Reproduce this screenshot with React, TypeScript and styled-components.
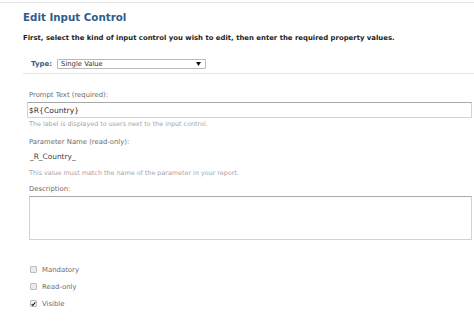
import React from "react";
import styled, { createGlobalStyle } from "styled-components";

const GlobalStyle = createGlobalStyle`
  html, body {
    margin: 0;
    padding: 0;
    background: #ffffff;
  }
  body {
    font-family: "DejaVu Sans", Verdana, sans-serif;
    color: #444;
  }
`;

const Page = styled.div`
  width: 474px;
  height: 328px;
  overflow: hidden;
  background: #fff;
`;

const TopRule = styled.div`
  margin-top: 2px;
  border-top: 1px solid #e2e2e2;
`;

const Header = styled.div`
  padding-left: 23px;
`;

const Title = styled.h1`
  margin: 8px 0 0;
  font-size: 10.3px;
  line-height: 12px;
  font-weight: bold;
  color: #2f5d8c;
`;

const Intro = styled.p`
  margin: 11px 0 0;
  font-size: 6.9px;
  line-height: 8px;
  font-weight: bold;
  color: #222;
  white-space: nowrap;
`;

const TypeRow = styled.div`
  margin-top: 17px;
  padding: 0 0 4px 8px;
  border-bottom: 1px solid #e6e6e6;
  display: flex;
  align-items: center;
  gap: 5px;
`;

const TypeLabel = styled.span`
  font-size: 7px;
  line-height: 10px;
  font-weight: bold;
  color: #2f5d8c;
`;

const Select = styled.div`
  box-sizing: border-box;
  width: 149px;
  height: 10px;
  border: 1px solid #b9b9b9;
  border-radius: 1px;
  padding: 0 4px 0 3px;
  display: flex;
  align-items: center;
  justify-content: space-between;
  font-size: 6.8px;
  color: #333;
  background: #fff;
`;

const Fields = styled.div`
  padding-left: 27px;
`;

const Label = styled.div<{ $top: number }>`
  margin-top: ${(p) => p.$top}px;
  padding-left: 2px;
  font-size: 6.85px;
  line-height: 8px;
  color: #6b6b6b;
  white-space: nowrap;
`;

const TextInput = styled.div`
  box-sizing: border-box;
  margin-top: 3px;
  width: 445px;
  height: 16px;
  border: 1px solid #d3d3d3;
  border-top-color: #a9a9a9;
  padding-left: 1px;
  display: flex;
  align-items: center;
  font-size: 7.6px;
  color: #333;
`;

const Help = styled.div<{ $top: number }>`
  margin-top: ${(p) => p.$top}px;
  padding-left: 2px;
  font-size: 6.4px;
  line-height: 8px;
  color: #a6a6a6;
  white-space: nowrap;
`;

const ReadOnly = styled.div`
  margin-top: 6px;
  padding-left: 3px;
  font-size: 7.4px;
  line-height: 10px;
  color: #444;
`;

const TextArea = styled.div`
  box-sizing: border-box;
  margin: 3px 0 0 2px;
  width: 443px;
  height: 44px;
  border: 1px solid #d3d3d3;
  border-top-color: #a9a9a9;
`;

const Checks = styled.div`
  margin-top: 21px;
  padding-left: 3px;
`;

const CheckRow = styled.div`
  height: 17px;
  display: flex;
  align-items: center;
  gap: 5px;
  font-size: 6.9px;
  color: #6b6b6b;
`;

const Box = styled.span<{ $checked?: boolean }>`
  box-sizing: border-box;
  width: 7px;
  height: 7px;
  border: 1px solid #bdbdbd;
  border-radius: 1px;
  background: ${(p) => (p.$checked ? "#f4f4f4" : "#ececec")};
  display: flex;
  align-items: center;
  justify-content: center;
`;

const Check = ({ label, checked }: { label: string; checked?: boolean }) => (
  <CheckRow>
    <Box $checked={checked}>
      {checked && (
        <svg width="6" height="6" viewBox="0 0 6 6">
          <path d="M0.8 3.2 L2.3 4.8 L5.2 0.9" stroke="#111" strokeWidth="1.3" fill="none" />
        </svg>
      )}
    </Box>
    {label}
  </CheckRow>
);

export default function App() {
  return (
    <Page>
      <GlobalStyle />
      <TopRule />
      <Header>
        <Title>Edit Input Control</Title>
        <Intro>
          First, select the kind of input control you wish to edit, then enter the required property values.
        </Intro>
        <TypeRow>
          <TypeLabel>Type:</TypeLabel>
          <Select>
            <span>Single Value</span>
            <svg width="5" height="4" viewBox="0 0 5 4">
              <path d="M0 0 H5 L2.5 4 Z" fill="#111" />
            </svg>
          </Select>
        </TypeRow>
      </Header>
      <Fields>
        <Label $top={17}>Prompt Text (required):</Label>
        <TextInput>$R{"{"}Country{"}"}</TextInput>
        <Help $top={2}>The label is displayed to users next to the input control.</Help>
        <Label $top={10}>Parameter Name (read-only):</Label>
        <ReadOnly>_R_Country_</ReadOnly>
        <Help $top={7}>This value must match the name of the parameter in your report.</Help>
        <Label $top={8}>Description:</Label>
        <TextArea />
        <Checks>
          <Check label="Mandatory" />
          <Check label="Read-only" />
          <Check label="Visible" checked />
        </Checks>
      </Fields>
    </Page>
  );
}
